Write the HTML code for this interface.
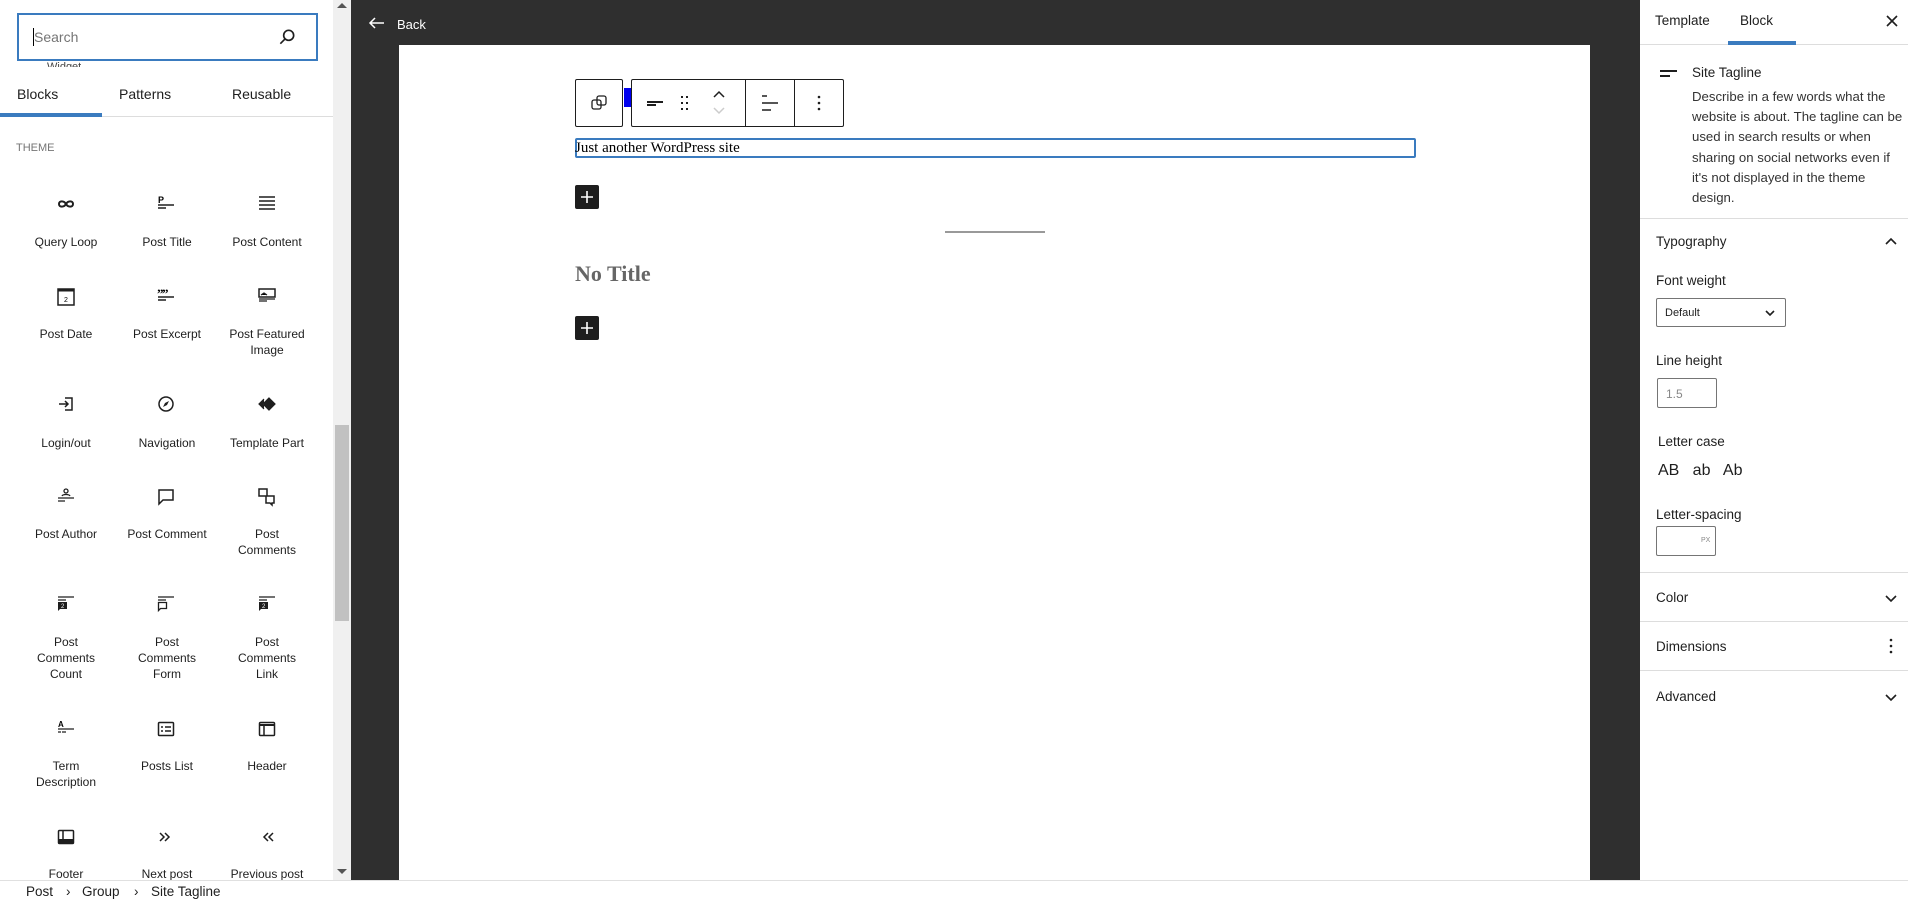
<!DOCTYPE html>
<html><head><meta charset="utf-8"><style>
*{box-sizing:border-box;margin:0;padding:0}
body{width:1908px;height:899px;overflow:hidden;position:relative;background:#fff;font-family:"Liberation Sans",sans-serif;color:#1e1e1e}
.a{position:absolute}
.lbl{position:absolute;width:100px;text-align:center;font-size:12px;line-height:16px;color:#1e1e1e}
.ic{position:absolute;width:24px;height:24px}
.t{position:absolute;font-size:13px;color:#1e1e1e}
.r{font-size:13.5px}
.hr{position:absolute;left:1640px;width:268px;height:1px;background:#ddd}
svg{display:block}
</style></head><body>
<!-- left panel -->
<div class="a" style="left:0;top:0;width:333px;height:880px;background:#fff"></div>
<div class="a" style="left:333px;top:0;width:18px;height:880px;background:#f0f0f0"></div>
<div class="a" style="left:335px;top:425px;width:14px;height:196px;background:#c1c1c1"></div>
<div class="a" style="left:337px;top:3px;width:0;height:0;border-left:5px solid transparent;border-right:5px solid transparent;border-bottom:5px solid #555"></div>
<div class="a" style="left:337px;top:869px;width:0;height:0;border-left:5px solid transparent;border-right:5px solid transparent;border-top:5px solid #555"></div>
<div class="a" style="left:17px;top:13px;width:301px;height:48px;border:2px solid #3a7bbf;background:#fff"></div>
<div class="a" style="left:33px;top:28px;width:1px;height:18px;background:#000"></div>
<div class="t" style="left:34px;top:29px;font-size:14px;color:#757575">Search</div>
<svg class="a" style="left:277px;top:27px" width="20" height="20" viewBox="0 0 24 24"><circle cx="14" cy="10" r="6" fill="none" stroke="#1e1e1e" stroke-width="2"/><path d="M9.5 14.5L4 20" stroke="#1e1e1e" stroke-width="2"/></svg>
<div class="t" style="left:47px;top:61px;font-size:11px;height:6px;overflow:hidden;color:#444">Widget</div>
<div class="t" style="left:17px;top:86px;font-size:14px">Blocks</div>
<div class="t" style="left:119px;top:86px;font-size:14px">Patterns</div>
<div class="t" style="left:232px;top:86px;font-size:14px">Reusable</div>
<div class="a" style="left:0;top:116px;width:333px;height:1px;background:#ddd"></div>
<div class="a" style="left:0;top:113px;width:102px;height:4px;background:#3a7bbf"></div>
<div class="t" style="left:16px;top:142px;font-size:11px;color:#757575">THEME</div>

<!-- row1 -->
<svg class="ic" style="left:54px;top:192px" viewBox="0 0 24 24"><path d="M12 12c-2-3.5-7-3.5-7 0s5 3.5 7 0 7-3.5 7 0-5 3.5-7 0" fill="none" stroke="#1e1e1e" stroke-width="2"/></svg>
<svg class="ic" style="left:154px;top:192px" viewBox="0 0 24 24"><text x="4" y="11" font-size="9" font-weight="bold" font-family="Liberation Sans">P</text><path d="M4 13h16M4 16h8" stroke="#1e1e1e" stroke-width="1.5"/></svg>
<svg class="ic" style="left:255px;top:192px" viewBox="0 0 24 24"><path d="M4 5h16M4 9h16M4 13h16M4 17h16" stroke="#1e1e1e" stroke-width="1.5"/></svg>
<div class="lbl" style="left:16px;top:234px">Query Loop</div>
<div class="lbl" style="left:117px;top:234px">Post Title</div>
<div class="lbl" style="left:217px;top:234px">Post Content</div>
<!-- row2 -->
<svg class="ic" style="left:54px;top:284px" viewBox="0 0 24 24"><rect x="4" y="5" width="16" height="16" fill="none" stroke="#1e1e1e" stroke-width="1.5"/><path d="M4 6h16" stroke="#1e1e1e" stroke-width="3"/><text x="10" y="18" font-size="7" font-family="Liberation Sans">2</text></svg>
<svg class="ic" style="left:154px;top:284px" viewBox="0 0 24 24"><text x="3" y="14" font-size="13" font-weight="bold" font-family="Liberation Serif">”</text><text x="8" y="14" font-size="13" font-weight="bold" font-family="Liberation Serif">”</text><path d="M4 13h16M4 16h8" stroke="#1e1e1e" stroke-width="1.5"/></svg>
<svg class="ic" style="left:255px;top:284px" viewBox="0 0 24 24"><rect x="4" y="5" width="16" height="8" fill="none" stroke="#1e1e1e" stroke-width="1.5"/><path d="M6 11l3-2 3 2M4 15h16M4 17h8" stroke="#1e1e1e" stroke-width="1.2"/></svg>
<div class="lbl" style="left:16px;top:326px">Post Date</div>
<div class="lbl" style="left:117px;top:326px">Post Excerpt</div>
<div class="lbl" style="left:217px;top:326px">Post Featured Image</div>
<!-- row3 -->
<svg class="ic" style="left:54px;top:392px" viewBox="0 0 24 24"><path d="M11 6h7v12h-7M5 12h9M11 9l3 3-3 3" fill="none" stroke="#1e1e1e" stroke-width="1.5"/></svg>
<svg class="ic" style="left:154px;top:392px" viewBox="0 0 24 24"><circle cx="12" cy="12" r="7" fill="none" stroke="#1e1e1e" stroke-width="1.5"/><path d="M15 9l-2 4-4 2 2-4z" fill="#1e1e1e"/></svg>
<svg class="ic" style="left:255px;top:392px" viewBox="0 0 24 24"><path d="M14 6l6 6-6 6-6-6zM9 7l-5 5 5 5" fill="#1e1e1e" stroke="#1e1e1e" stroke-width="1.2"/></svg>
<div class="lbl" style="left:16px;top:435px">Login/out</div>
<div class="lbl" style="left:117px;top:435px">Navigation</div>
<div class="lbl" style="left:217px;top:435px">Template Part</div>
<!-- row4 -->
<svg class="ic" style="left:54px;top:485px" viewBox="0 0 24 24"><circle cx="12" cy="6" r="2" fill="none" stroke="#1e1e1e" stroke-width="1.3"/><path d="M8 11c1-2 7-2 8 0M4 13h16M4 16h7" fill="none" stroke="#1e1e1e" stroke-width="1.3"/></svg>
<svg class="ic" style="left:154px;top:485px" viewBox="0 0 24 24"><path d="M5 5h14v10H9l-4 4z" fill="none" stroke="#1e1e1e" stroke-width="1.5"/></svg>
<svg class="ic" style="left:255px;top:485px" viewBox="0 0 24 24"><path d="M4 4h8v7H4zM11 11h8v7h-2v2l-2-2h-4z" fill="none" stroke="#1e1e1e" stroke-width="1.5"/></svg>
<div class="lbl" style="left:16px;top:526px">Post Author</div>
<div class="lbl" style="left:117px;top:526px">Post Comment</div>
<div class="lbl" style="left:217px;top:526px">Post<br>Comments</div>
<!-- row5 -->
<svg class="ic" style="left:54px;top:593px" viewBox="0 0 24 24"><path d="M4 4h16M4 7h8" stroke="#1e1e1e" stroke-width="1.3"/><path d="M4 9h9v7H6l-2 2z" fill="#1e1e1e"/><text x="7" y="15" font-size="6" fill="#fff" font-family="Liberation Sans">2</text></svg>
<svg class="ic" style="left:154px;top:593px" viewBox="0 0 24 24"><path d="M4 4h16M4 7h8" stroke="#1e1e1e" stroke-width="1.3"/><path d="M4.5 9.5h8v6H6.5l-2 2z" fill="none" stroke="#1e1e1e" stroke-width="1.3"/></svg>
<svg class="ic" style="left:255px;top:593px" viewBox="0 0 24 24"><path d="M4 4h16M4 7h8" stroke="#1e1e1e" stroke-width="1.3"/><path d="M4 9h9v7H6l-2 2z" fill="#1e1e1e"/><text x="7" y="15" font-size="6" fill="#fff" font-family="Liberation Sans">2</text></svg>
<div class="lbl" style="left:16px;top:634px">Post<br>Comments<br>Count</div>
<div class="lbl" style="left:117px;top:634px">Post<br>Comments<br>Form</div>
<div class="lbl" style="left:217px;top:634px">Post<br>Comments<br>Link</div>
<!-- row6 -->
<svg class="ic" style="left:54px;top:717px" viewBox="0 0 24 24"><text x="4" y="10" font-size="8" font-weight="bold" font-family="Liberation Sans">A</text><path d="M4 12h16M4 15h3M8 15h4" stroke="#1e1e1e" stroke-width="1.3"/></svg>
<svg class="ic" style="left:154px;top:717px" viewBox="0 0 24 24"><rect x="4.5" y="5.5" width="15" height="13" rx="1" fill="none" stroke="#1e1e1e" stroke-width="1.5"/><path d="M7 10h2M11 10h6M7 14h2M11 14h6" stroke="#1e1e1e" stroke-width="1.5"/></svg>
<svg class="ic" style="left:255px;top:717px" viewBox="0 0 24 24"><rect x="4.5" y="5.5" width="15" height="13" rx="1" fill="none" stroke="#1e1e1e" stroke-width="1.5"/><path d="M4 7h16v2H4z" fill="#1e1e1e"/><path d="M9 9v9" stroke="#1e1e1e" stroke-width="1.5"/></svg>
<div class="lbl" style="left:16px;top:758px">Term<br>Description</div>
<div class="lbl" style="left:117px;top:758px">Posts List</div>
<div class="lbl" style="left:217px;top:758px">Header</div>
<!-- row7 -->
<svg class="ic" style="left:54px;top:825px" viewBox="0 0 24 24"><rect x="4.5" y="5.5" width="15" height="13" rx="1" fill="none" stroke="#1e1e1e" stroke-width="1.5"/><path d="M4 14h16v4H4z" fill="#1e1e1e"/><path d="M9 6v8" stroke="#1e1e1e" stroke-width="1.5"/></svg>
<svg class="ic" style="left:154px;top:825px" viewBox="0 0 24 24"><path d="M6 8l4 4-4 4M11 8l4 4-4 4" fill="none" stroke="#1e1e1e" stroke-width="1.5"/></svg>
<svg class="ic" style="left:255px;top:825px" viewBox="0 0 24 24"><path d="M13 8l-4 4 4 4M18 8l-4 4 4 4" fill="none" stroke="#1e1e1e" stroke-width="1.5"/></svg>
<div class="lbl" style="left:16px;top:866px">Footer</div>
<div class="lbl" style="left:117px;top:866px">Next post</div>
<div class="lbl" style="left:217px;top:866px">Previous post</div>

<!-- dark editor -->
<div class="a" style="left:351px;top:0;width:1289px;height:880px;background:#2f2f2f"></div>
<svg class="a" style="left:367px;top:13px" width="20" height="20" viewBox="0 0 20 20"><path d="M17 10H3M8 5l-5 5 5 5" fill="none" stroke="#fff" stroke-width="1.5"/></svg>
<div class="t" style="left:397px;top:17px;color:#fff">Back</div>
<div class="a" style="left:399px;top:45px;width:1191px;height:835px;background:#fff"></div>
<!-- toolbar -->
<div class="a" style="left:624px;top:88px;width:8px;height:19px;background:#0000ee"></div>
<div class="a" style="left:575px;top:79px;width:48px;height:48px;border:1px solid #1e1e1e;border-radius:2px;background:#fff"></div>
<svg class="a" style="left:587px;top:91px" width="24" height="24" viewBox="0 0 24 24"><rect x="5" y="9" width="9" height="9" rx="2" fill="none" stroke="#1e1e1e" stroke-width="1.3"/><rect x="10" y="5" width="9" height="9" rx="2" fill="none" stroke="#1e1e1e" stroke-width="1.3"/></svg>
<div class="a" style="left:631px;top:79px;width:213px;height:48px;border:1px solid #1e1e1e;border-radius:2px;background:#fff"></div>
<div class="a" style="left:745px;top:79px;width:1px;height:48px;background:#1e1e1e"></div>
<div class="a" style="left:794px;top:79px;width:1px;height:48px;background:#1e1e1e"></div>
<div class="a" style="left:647px;top:101px;width:16px;height:2px;background:#1e1e1e"></div>
<div class="a" style="left:647px;top:104px;width:9px;height:2px;background:#1e1e1e"></div>
<svg class="a" style="left:679px;top:94px" width="12" height="18" viewBox="0 0 12 18"><g fill="#1e1e1e"><rect x="2" y="2" width="2" height="2"/><rect x="7" y="2" width="2" height="2"/><rect x="2" y="8" width="2" height="2"/><rect x="7" y="8" width="2" height="2"/><rect x="2" y="14" width="2" height="2"/><rect x="7" y="14" width="2" height="2"/></g></svg>
<svg class="a" style="left:711px;top:89px" width="16" height="28" viewBox="0 0 16 28"><path d="M3 8l5-5 5 5" fill="none" stroke="#1e1e1e" stroke-width="1.5"/><path d="M3 19l5 5 5-5" fill="none" stroke="#ccc" stroke-width="1.5"/></svg>
<svg class="a" style="left:760px;top:94px" width="20" height="18" viewBox="0 0 20 18"><path d="M2 2h5M2 9h16M2 16h9" stroke="#1e1e1e" stroke-width="1.5"/></svg>
<svg class="a" style="left:816px;top:94px" width="6" height="18" viewBox="0 0 6 18"><g fill="#1e1e1e"><circle cx="3" cy="3" r="1.3"/><circle cx="3" cy="9" r="1.3"/><circle cx="3" cy="15" r="1.3"/></g></svg>
<div class="a" style="left:575px;top:138px;width:841px;height:20px;border:2px solid #3a7bbf;border-radius:2px"></div>
<div class="a" style="left:575px;top:139px;font-family:'Liberation Serif',serif;font-size:15px;line-height:18px;color:#000">Just another WordPress site</div>
<div class="a" style="left:575px;top:185px;width:24px;height:24px;background:#1e1e1e;border-radius:2px"></div>
<svg class="a" style="left:575px;top:185px" width="24" height="24" viewBox="0 0 24 24"><path d="M12 6v12M6 12h12" stroke="#fff" stroke-width="1.6"/></svg>
<div class="a" style="left:945px;top:231px;width:100px;height:2px;background:#999"></div>
<div class="a" style="left:575px;top:261px;font-family:'Liberation Serif',serif;font-weight:bold;font-size:22px;color:#666">No Title</div>
<div class="a" style="left:575px;top:316px;width:24px;height:24px;background:#1e1e1e;border-radius:2px"></div>
<svg class="a" style="left:575px;top:316px" width="24" height="24" viewBox="0 0 24 24"><path d="M12 6v12M6 12h12" stroke="#fff" stroke-width="1.6"/></svg>

<!-- breadcrumb -->
<div class="a" style="left:0;top:880px;width:1908px;height:19px;background:#fff;border-top:1px solid #e0e0e0"></div>
<div class="t" style="left:26px;top:884px;font-size:13.5px">Post</div>
<div class="t" style="left:66px;top:884px;font-size:13.5px">›</div>
<div class="t" style="left:82px;top:884px;font-size:13.5px">Group</div>
<div class="t" style="left:134px;top:884px;font-size:13.5px">›</div>
<div class="t" style="left:151px;top:884px;font-size:13.5px">Site Tagline</div>

<!-- right panel -->
<div class="a" style="left:1640px;top:0;width:268px;height:880px;background:#fff"></div>
<div class="t r" style="left:1655px;top:13px">Template</div>
<div class="t r" style="left:1740px;top:13px">Block</div>
<div class="hr" style="top:44px"></div>
<div class="a" style="left:1728px;top:41px;width:68px;height:4px;background:#3a7bbf"></div>
<svg class="a" style="left:1885px;top:14px" width="14" height="14" viewBox="0 0 14 14"><path d="M2 2l10 10M12 2L2 12" stroke="#1e1e1e" stroke-width="1.6"/></svg>
<div class="a" style="left:1660px;top:70px;width:17px;height:2px;background:#1e1e1e"></div>
<div class="a" style="left:1660px;top:75px;width:10px;height:2px;background:#1e1e1e"></div>
<div class="t r" style="left:1692px;top:65px">Site Tagline</div>
<div class="t" style="left:1692px;top:87px;width:216px;font-size:13.2px;line-height:20.2px;color:#333">Describe in a few words what the website is about. The tagline can be used in search results or when sharing on social networks even if it's not displayed in the theme design.</div>
<div class="hr" style="top:218px"></div>
<div class="t r" style="left:1656px;top:234px">Typography</div>
<svg class="a" style="left:1884px;top:235px" width="14" height="14" viewBox="0 0 14 14"><path d="M2 9l5-5 5 5" fill="none" stroke="#1e1e1e" stroke-width="1.6"/></svg>
<div class="t r" style="left:1656px;top:273px">Font weight</div>
<div class="a" style="left:1656px;top:298px;width:130px;height:29px;border:1px solid #757575;border-radius:2px"></div>
<div class="t" style="left:1665px;top:307px;font-size:11px">Default</div>
<svg class="a" style="left:1764px;top:307px" width="12" height="12" viewBox="0 0 12 12"><path d="M2 4l4 4 4-4" fill="none" stroke="#1e1e1e" stroke-width="1.6"/></svg>
<div class="t r" style="left:1656px;top:353px">Line height</div>
<div class="a" style="left:1657px;top:378px;width:60px;height:30px;border:1px solid #757575;border-radius:2px"></div>
<div class="t" style="left:1666px;top:387px;font-size:12px;color:#888">1.5</div>
<div class="t r" style="left:1658px;top:434px">Letter case</div>
<div class="t" style="left:1658px;top:462px;font-size:16px">AB&nbsp;&nbsp; ab&nbsp;&nbsp; Ab</div>
<div class="t r" style="left:1656px;top:507px">Letter-spacing</div>
<div class="a" style="left:1656px;top:526px;width:60px;height:30px;border:1px solid #757575;border-radius:2px"></div>
<div class="t" style="left:1701px;top:537px;font-size:7px;color:#888">PX</div>
<div class="hr" style="top:572px"></div>
<div class="t r" style="left:1656px;top:590px">Color</div>
<svg class="a" style="left:1884px;top:591px" width="14" height="14" viewBox="0 0 14 14"><path d="M2 5l5 5 5-5" fill="none" stroke="#1e1e1e" stroke-width="1.6"/></svg>
<div class="hr" style="top:621px"></div>
<div class="t r" style="left:1656px;top:639px">Dimensions</div>
<svg class="a" style="left:1888px;top:637px" width="6" height="18" viewBox="0 0 6 18"><g fill="#1e1e1e"><circle cx="3" cy="3" r="1.3"/><circle cx="3" cy="9" r="1.3"/><circle cx="3" cy="15" r="1.3"/></g></svg>
<div class="hr" style="top:670px"></div>
<div class="t r" style="left:1656px;top:689px">Advanced</div>
<svg class="a" style="left:1884px;top:690px" width="14" height="14" viewBox="0 0 14 14"><path d="M2 5l5 5 5-5" fill="none" stroke="#1e1e1e" stroke-width="1.6"/></svg>
</body></html>
